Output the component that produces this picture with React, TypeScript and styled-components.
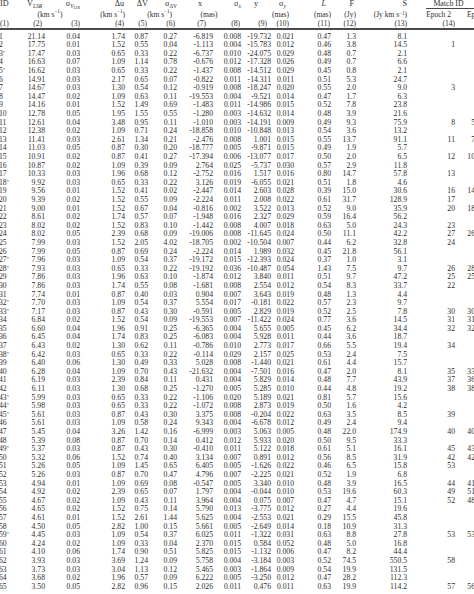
import React from "react";
import styled, { createGlobalStyle } from "styled-components";

const GlobalStyle = createGlobalStyle`
  html, body {
    margin: 0;
    padding: 0;
    background: #ffffff;
  }
  body {
    width: 474px;
    height: 594px;
    overflow: hidden;
    font-family: "Liberation Serif", "DejaVu Serif", serif;
    color: #2e2e2e;
  }
`;

// column widths, the body numbers are right aligned to the end of each column
const COLS =
  "20px 25px 35px 45px 23px 29px 36px 28px 30px 23px 37px 25px 51px 48px 20px";

const DATA = `
1 21.14 0.04 1.74 0.87 0.27 -6.819 0.008 -19.732 0.021 0.47 1.3 8.1
2 17.75 0.01 1.52 0.55 0.04 -1.113 0.004 -15.783 0.012 0.46 3.8 14.5 1
3* 17.47 0.03 0.65 0.33 0.22 -6.737 0.010 -24.075 0.029 0.48 0.7 2.1
4 16.63 0.07 1.09 1.14 0.78 -0.676 0.012 -17.328 0.026 0.49 0.7 6.6
5* 16.62 0.03 0.65 0.33 0.22 -1.437 0.008 -14.512 0.029 0.45 0.8 2.1
6 14.91 0.03 2.17 0.65 0.07 -0.822 0.011 -14.311 0.011 0.51 5.3 24.7
7 14.67 0.03 1.30 0.54 0.12 -0.919 0.008 -18.247 0.020 0.55 2.0 9.0 3
8 14.47 0.02 1.09 0.63 0.11 -19.553 0.004 -9.521 0.014 0.47 1.7 6.3
9 14.16 0.01 1.52 1.49 0.69 -1.483 0.011 -14.986 0.015 0.52 7.8 23.8
10 12.78 0.05 1.95 1.55 0.55 -1.280 0.003 -14.632 0.014 0.48 3.9 21.6
11 12.61 0.04 3.48 0.95 0.11 -1.010 0.003 -14.191 0.009 0.49 9.3 75.9 8 5
12 12.38 0.02 1.09 0.71 0.24 -18.858 0.010 -10.848 0.013 0.54 3.6 13.2
13 11.41 0.03 2.61 1.34 0.21 -2.476 0.008 1.001 0.015 0.55 13.7 91.1 11 7
14 11.03 0.05 0.87 0.30 0.20 -18.777 0.005 -9.871 0.015 0.49 1.9 5.7
15 10.91 0.02 0.87 0.41 0.27 -17.394 0.006 -13.077 0.017 0.50 2.0 6.5 12 10
16 10.87 0.02 1.09 0.39 0.09 2.764 0.025 -5.737 0.030 0.57 2.9 11.8
17 10.33 0.03 1.96 0.68 0.12 -2.752 0.016 1.517 0.016 0.80 14.7 57.8 13
18* 9.92 0.03 0.65 0.33 0.22 3.126 0.019 -6.055 0.021 0.51 1.8 4.6
19 9.56 0.01 1.52 0.41 0.02 -2.447 0.014 2.603 0.028 0.39 15.0 30.6 16 14
20 9.39 0.02 1.52 0.55 0.09 -2.224 0.011 2.008 0.022 0.61 31.7 128.9 17
21 9.00 0.01 1.52 0.67 0.04 -0.816 0.002 3.522 0.013 0.52 9.0 35.9 20 18
22 8.61 0.02 1.74 0.57 0.07 -1.948 0.016 2.327 0.029 0.59 16.4 56.2
23 8.02 0.02 1.52 0.83 0.10 -1.442 0.008 4.007 0.018 0.63 5.0 24.3 23
24 8.02 0.05 2.39 0.68 0.09 -19.006 0.008 -11.645 0.024 0.50 11.1 42.2 27 26
25 7.99 0.03 1.52 2.05 4.02 -18.705 0.002 -10.504 0.007 0.44 6.2 32.8 24
26 7.99 0.05 0.87 0.69 0.24 -2.224 0.014 1.989 0.032 0.45 21.8 56.1
27* 7.96 0.03 1.09 0.54 0.37 -19.172 0.015 -12.393 0.024 0.37 1.0 3.1
28* 7.93 0.03 0.65 0.33 0.22 -19.192 0.036 -10.487 0.054 1.43 7.5 9.7 26 28
29 7.86 0.03 1.96 0.63 0.10 -1.874 0.012 3.840 0.011 0.51 9.7 47.2 25 25
30 7.86 0.03 1.74 0.55 0.08 -1.681 0.008 2.554 0.012 0.54 8.3 33.7 22
31 7.74 0.01 0.87 0.40 0.03 0.904 0.007 3.643 0.019 0.48 1.3 4.4
32* 7.70 0.03 1.09 0.54 0.37 5.554 0.017 -0.181 0.022 0.57 2.3 9.7
33* 7.17 0.03 0.87 0.43 0.30 -0.591 0.005 2.829 0.019 0.52 2.5 7.8 30 30
34 6.84 0.02 1.52 0.54 0.09 -19.553 0.007 -11.422 0.024 0.77 3.6 14.5 31 31
35 6.60 0.04 1.96 0.91 0.25 -6.365 0.004 5.655 0.005 0.45 6.2 34.4 32 32
36 6.45 0.04 1.74 0.83 0.25 -6.083 0.004 5.928 0.011 0.44 3.6 18.7
37 6.43 0.02 1.30 0.62 0.11 -0.786 0.010 2.773 0.017 0.66 5.5 19.4 34
38* 6.42 0.03 0.65 0.33 0.22 -0.114 0.029 2.157 0.025 0.53 2.4 7.5
39 6.40 0.06 1.30 0.49 0.33 5.028 0.008 -1.440 0.021 0.61 4.4 15.7
40 6.28 0.04 1.09 0.70 0.43 -21.632 0.004 -7.501 0.016 0.47 2.0 8.1 35 33
41 6.19 0.03 2.39 0.84 0.11 0.431 0.004 5.829 0.014 0.48 7.7 43.9 37 36
42 6.11 0.03 1.30 0.68 0.25 -1.270 0.005 5.285 0.010 0.44 4.8 19.2 38 38
43* 5.99 0.03 0.65 0.33 0.22 -1.106 0.020 5.189 0.021 0.81 5.7 15.6
44* 5.98 0.03 0.65 0.33 0.22 -1.072 0.008 2.873 0.019 0.50 1.6 4.2
45* 5.61 0.03 0.87 0.43 0.30 3.375 0.008 -0.204 0.022 0.63 3.5 8.5 39
46 5.61 0.03 1.09 0.58 0.24 9.343 0.004 -6.678 0.012 0.49 2.4 9.4
47 5.45 0.04 3.26 1.42 0.16 -6.999 0.003 5.063 0.005 0.48 22.0 174.9 40 40
48 5.39 0.08 0.87 0.70 0.14 0.412 0.012 5.933 0.020 0.50 9.5 33.3
49* 5.37 0.03 0.87 0.43 0.30 -0.410 0.011 5.122 0.018 0.61 5.1 16.1 45 43
50 5.32 0.06 1.52 0.74 0.40 3.134 0.007 0.891 0.012 0.56 8.5 31.9 42 42
51 5.26 0.05 1.09 1.45 0.65 6.405 0.005 -1.626 0.022 0.46 6.5 15.8 53
52 5.26 0.03 0.87 0.70 0.47 4.796 0.007 -2.225 0.021 0.52 1.9 6.8
53 4.94 0.01 1.09 0.69 0.08 -0.547 0.005 3.340 0.010 0.48 3.9 16.5 44 41
54 4.92 0.02 2.39 0.65 0.07 1.797 0.004 -0.044 0.010 0.53 19.6 60.3 49 51
55 4.67 0.02 1.09 0.43 0.11 3.964 0.004 0.075 0.007 0.47 4.7 15.1 52 48
56 4.65 0.02 1.52 0.75 0.14 5.790 0.013 -3.775 0.012 0.27 4.4 19.6
57 4.61 0.01 1.52 2.61 1.44 5.625 0.004 -2.553 0.021 0.29 15.5 45.8
58 4.50 0.05 2.82 1.00 0.15 5.661 0.005 -2.649 0.014 0.18 10.9 31.3
59* 4.45 0.03 1.09 0.54 0.37 6.025 0.011 -1.322 0.031 0.63 8.8 27.8 53 53
60 4.24 0.02 1.09 0.33 0.04 2.370 0.015 0.584 0.052 0.48 5.0 16.8
61 4.10 0.06 1.74 0.90 0.51 5.825 0.015 -1.132 0.006 0.47 8.2 44.4
62 3.93 0.03 3.69 1.24 0.09 5.758 0.004 -3.184 0.003 0.52 74.5 550.5 58
63 3.73 0.03 3.04 1.13 0.12 5.465 0.003 -1.864 0.009 0.54 19.9 131.5
64 3.68 0.02 1.96 0.57 0.09 6.222 0.005 -3.250 0.012 0.47 28.2 112.3
65 3.50 0.05 2.82 0.96 0.15 2.026 0.011 0.476 0.011 0.63 19.9 114.2 57 56
`
  .trim()
  .split("\n")
  .map((line) => line.trim().split(/\s+/));

const Table = styled.div`
  width: 475px;
  font-size: 7.7px;
  white-space: nowrap;
`;

const Head = styled.div`
  display: grid;
  grid-template-columns: ${COLS};
  grid-template-rows: 9px 11px 8px;
  align-items: center;
  line-height: 1;
  border-bottom: 2px solid #4a4a4a;
`;

type Align = "start" | "center" | "end";

const HeadCell = styled.div<{ $col: string; $row: number; $align?: Align; $inset?: number }>`
  grid-column: ${(p) => p.$col};
  grid-row: ${(p) => p.$row};
  display: flex;
  justify-content: ${(p) =>
    p.$align === "start" ? "flex-start" : p.$align === "center" ? "center" : "flex-end"};
  padding-left: ${(p) => (p.$align === "start" ? p.$inset ?? 0 : 0)}px;
  padding-right: ${(p) => (p.$align === "end" || !p.$align ? p.$inset ?? 0 : 0)}px;
  font-size: ${(p) => (p.$row === 1 ? "8.2px" : "7.5px")};
`;

const MatchHead = styled.div`
  grid-column: 14 / 16;
  grid-row: 1;
  align-self: stretch;
  margin-left: 19px;
  display: flex;
  align-items: center;
  justify-content: center;
  padding-right: 4px;
  border-bottom: 1px solid #4a4a4a;
  font-size: 7.8px;
`;

const Sub = styled.sub<{ $it?: boolean }>`
  font-size: 0.68em;
  vertical-align: -0.35em;
  line-height: 0;
  font-style: ${(p) => (p.$it ? "italic" : "normal")};
`;

const Sup = styled.sup`
  font-size: 0.68em;
  vertical-align: 0.45em;
  line-height: 0;
`;

const Ital = styled.span`
  font-style: italic;
`;

const Body = styled.div`
  padding-top: 2.7px;
`;

const Row = styled.div`
  display: grid;
  grid-template-columns: ${COLS};
  height: 8.6px;
  line-height: 8.6px;
`;

const Cell = styled.span`
  text-align: right;
`;

const IdCell = styled.span`
  text-align: left;
  margin-left: -1px;
`;

const Star = styled.sup`
  font-size: 0.6em;
  vertical-align: 0.5em;
  line-height: 0;
`;

const Kms = () => (
  <>
    (km s<Sup>−1</Sup>)
  </>
);

export default function App() {
  return (
    <>
      <GlobalStyle />
      <Table>
        <Head>
          <HeadCell $row={1} $col="1" $align="start">ID</HeadCell>
          <HeadCell $row={1} $col="2" $align="start" $inset={7}>
            <span>
              V<Sub $it>LSR</Sub>
            </span>
          </HeadCell>
          <HeadCell $row={1} $col="3">
            <span>
              σ<Sub>
                <Ital>V</Ital>
                <Sub $it>LSR</Sub>
              </Sub>
            </span>
          </HeadCell>
          <HeadCell $row={1} $col="4" $inset={1}>Δu</HeadCell>
          <HeadCell $row={1} $col="5">ΔV</HeadCell>
          <HeadCell $row={1} $col="6">
            <span>
              σ<Sub>ΔV</Sub>
            </span>
          </HeadCell>
          <HeadCell $row={1} $col="7" $inset={11}>x</HeadCell>
          <HeadCell $row={1} $col="8">
            <span>
              σ<Sub $it>x</Sub>
            </span>
          </HeadCell>
          <HeadCell $row={1} $col="9" $align="center">y</HeadCell>
          <HeadCell $row={1} $col="10" $align="center">
            <span>
              σ<Sub $it>y</Sub>
            </span>
          </HeadCell>
          <HeadCell $row={1} $col="11" $inset={5}>
            <Ital>L</Ital>
          </HeadCell>
          <HeadCell $row={1} $col="12" $inset={2}>F</HeadCell>
          <HeadCell $row={1} $col="13">S</HeadCell>
          <MatchHead>Match ID</MatchHead>

          <HeadCell $row={2} $col="2 / 4" $align="center">
            <Kms />
          </HeadCell>
          <HeadCell $row={2} $col="4">
            <Kms />
          </HeadCell>
          <HeadCell $row={2} $col="5 / 7" $inset={5}>
            <Kms />
          </HeadCell>
          <HeadCell $row={2} $col="7 / 9" $align="center">(mas)</HeadCell>
          <HeadCell $row={2} $col="9 / 11" $inset={5}>(mas)</HeadCell>
          <HeadCell $row={2} $col="11">(mas)</HeadCell>
          <HeadCell $row={2} $col="12">(Jy)</HeadCell>
          <HeadCell $row={2} $col="13">
            <span>
              (Jy km s<Sup>−1</Sup>)
            </span>
          </HeadCell>
          <HeadCell $row={2} $col="14" $inset={4}>Epoch 2</HeadCell>
          <HeadCell $row={2} $col="15" $align="start" $inset={12}>Epoch 3</HeadCell>

          <HeadCell $row={3} $col="1" $align="start">(1)</HeadCell>
          <HeadCell $row={3} $col="2" $inset={3}>(2)</HeadCell>
          <HeadCell $row={3} $col="3">(3)</HeadCell>
          <HeadCell $row={3} $col="4" $inset={1}>(4)</HeadCell>
          <HeadCell $row={3} $col="5" $inset={1}>(5)</HeadCell>
          <HeadCell $row={3} $col="6" $inset={2}>(6)</HeadCell>
          <HeadCell $row={3} $col="7" $inset={7}>(7)</HeadCell>
          <HeadCell $row={3} $col="8" $inset={1}>(8)</HeadCell>
          <HeadCell $row={3} $col="9" $inset={4}>(9)</HeadCell>
          <HeadCell $row={3} $col="10" $inset={5}>(10)</HeadCell>
          <HeadCell $row={3} $col="11" $inset={1}>(11)</HeadCell>
          <HeadCell $row={3} $col="12">(12)</HeadCell>
          <HeadCell $row={3} $col="13">(13)</HeadCell>
          <HeadCell $row={3} $col="14">(14)</HeadCell>
        </Head>

        <Body>
          {DATA.map(([id, ...vals]) => {
            const starred = id.endsWith("*");
            return (
              <Row key={id}>
                <IdCell>
                  {starred ? id.slice(0, -1) : id}
                  {starred && <Star>*</Star>}
                </IdCell>
                {vals.map((v, i) => (
                  <Cell key={i}>{v}</Cell>
                ))}
              </Row>
            );
          })}
        </Body>
      </Table>
    </>
  );
}
